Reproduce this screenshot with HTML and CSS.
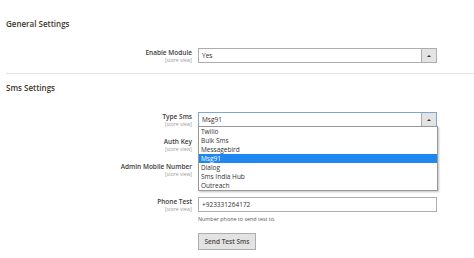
FILE: index.html
```html
<!DOCTYPE html>
<html>
<head>
    <title>Sms Settings</title>
    <link rel="stylesheet" href="styles.css">
</head>
<body>
    <div class="config">
        <div class="section">
            <h2>General Settings</h2>
            <div class="field">
                <div class="label">Enable Module<span>[store view]</span></div>
                <div class="control">
                    <div class="select"><span>Yes</span><i class="arrow"></i></div>
                </div>
            </div>
        </div>

        <div class="section sms">
            <h2>Sms Settings</h2>
            <div class="field">
                <div class="label">Type Sms<span>[store view]</span></div>
                <div class="control">
                    <div class="select open"><span>Msg91</span><i class="arrow"></i></div>
                    <ul class="options">
                        <li>Twilio</li>
                        <li>Bulk Sms</li>
                        <li>Messagebird</li>
                        <li class="active">Msg91</li>
                        <li>Dialog</li>
                        <li>Sms India Hub</li>
                        <li>Outreach</li>
                    </ul>
                </div>
            </div>
            <div class="field">
                <div class="label">Auth Key<span>[store view]</span></div>
                <div class="control">
                    <div class="input"></div>
                </div>
            </div>
            <div class="field">
                <div class="label">Admin Mobile Number<span>[store view]</span></div>
                <div class="control">
                    <div class="input"></div>
                </div>
            </div>
            <div class="field phone">
                <div class="label">Phone Test<span>[store view]</span></div>
                <div class="control">
                    <div class="input">+923331264172</div>
                    <p class="note">Number phone to send test to.</p>
                </div>
            </div>
            <div class="field">
                <div class="label"></div>
                <div class="control">
                    <button>Send Test Sms</button>
                </div>
            </div>
        </div>
    </div>
</body>
</html>
```

FILE: styles.css
```css
body {
    margin: 0;
    background: #fff;
    font-family: 'Open Sans', 'Noto Sans', sans-serif;
    color: #303030;
}
.config {
    padding: 0 0 0 6px;
}
h2 {
    margin: 0;
    font-size: 8px;
    font-weight: 600;
    color: #41362f;
    line-height: 12px;
}
.section {
    padding-top: 18px;
}
.section h2 {
    margin-bottom: 18px;
}
.sms {
    border-top: 1px solid #e3e3e3;
    margin-top: 10px;
    padding-top: 8px;
}
.sms h2 {
    margin-bottom: 18px;
}
.field {
    display: flex;
    gap: 6px;
    margin-bottom: 10px;
}
.phone {
    margin-top: 20px;
}
.label {
    width: 186px;
    padding-top: 1px;
    text-align: right;
    font-size: 6.5px;
    font-weight: 600;
    line-height: 8px;
    color: #3d3d3d;
}
.label span {
    display: block;
    font-size: 5px;
    font-weight: 400;
    line-height: 6px;
    color: #9a9a9a;
}
.control {
    width: 239px;
    position: relative;
}
.select, .input {
    height: 13px;
    border: 1px solid #adadad;
    display: flex;
    align-items: center;
    font-size: 6.5px;
    color: #303030;
    padding-left: 3px;
    background: #fff;
}
.select span {
    flex: 1;
}
.select.open {
    border-color: #7da7cf;
}
.arrow {
    width: 14px;
    height: 13px;
    background: #e3e3e3;
    border-left: 1px solid #adadad;
    display: flex;
    align-items: center;
    justify-content: center;
}
.arrow::after {
    content: '';
    border-left: 2px solid transparent;
    border-right: 2px solid transparent;
    border-bottom: 2px solid #333;
}
.options {
    position: absolute;
    top: 14px;
    left: 0;
    width: 238px;
    margin: 0;
    padding: 0;
    list-style: none;
    background: #fff;
    border: 1px solid #999;
    box-shadow: 1px 1px 2px rgba(0,0,0,0.25);
    z-index: 2;
}
.options li {
    height: 9px;
    line-height: 9px;
    font-size: 6.5px;
    padding-left: 2px;
    color: #303030;
}
.options li.active {
    background: #1e88f0;
    color: #fff;
}
.note {
    margin: 3px 0 0;
    font-size: 5.4px;
    color: #555;
    line-height: 8px;
}
button {
    display: block;
    width: 58px;
    height: 17px;
    padding: 0;
    background: #e3e3e3;
    border: 1px solid #adadad;
    font-family: 'Open Sans', sans-serif;
    font-size: 6.5px;
    font-weight: 600;
    color: #514943;
}
```
